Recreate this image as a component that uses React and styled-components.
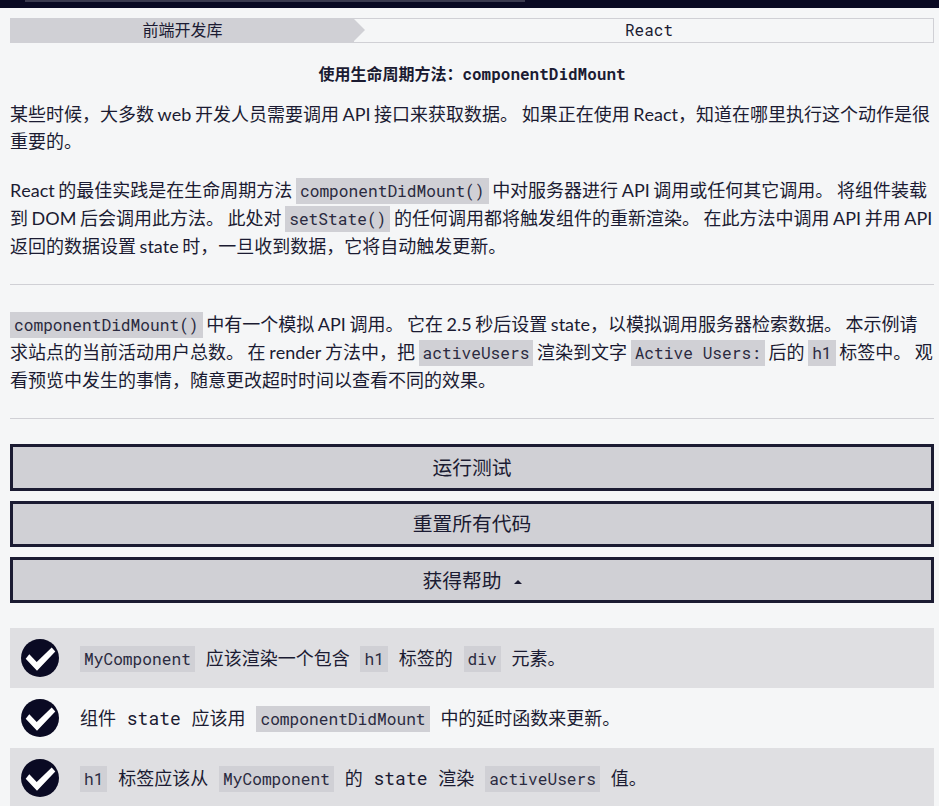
import React from "react";
import styled, { createGlobalStyle } from "styled-components";

const fonts = {
  body: `Lato, "Noto Sans CJK SC", sans-serif`,
  mono: `"Roboto Mono", "Noto Sans CJK SC", monospace`,
};

const colors = {
  page: "#f5f6f7",
  text: "#1b1b32",
  code: "#2a2a40",
  quaternary: "#d0d0d5",
  tertiary: "#dfdfe2",
  dark: "#0a0a23",
};

const GlobalStyle = createGlobalStyle`
  * {
    box-sizing: border-box;
  }
  body {
    margin: 0;
    background: ${colors.page};
    color: ${colors.text};
    font-family: ${fonts.body};
    font-size: 18px;
    overflow: hidden;
  }
`;

const TopBar = styled.div`
  height: 8px;
  background: ${colors.dark};
`;

const TopBarLine = styled.div`
  width: 500px;
  height: 2px;
  margin-left: 25px;
  background: #3b3b4f;
`;

const Panel = styled.main`
  height: 798px;
  padding: 10px 5px 0 10px;
  overflow: hidden;
`;

const Crumbs = styled.nav`
  display: flex;
  height: 25px;
  font-family: ${fonts.mono};
  font-size: 16px;
  line-height: 23px;
  text-align: center;
`;

const CrumbLeft = styled.div`
  position: relative;
  width: 344px;
  padding-left: 1px;
  background: ${colors.quaternary};

  &::after {
    content: "";
    position: absolute;
    top: 1px;
    left: 100%;
    border: solid transparent;
    border-width: 11.5px 0 11.5px 11px;
    border-left-color: ${colors.quaternary};
  }
`;

const CrumbRight = styled.div`
  flex: 1;
  padding-left: 11px;
  border: 1px solid ${colors.quaternary};
  border-left: 0;
  line-height: 21px;
`;

const Title = styled.h1`
  margin: 19px 0 15px;
  font-family: ${fonts.mono};
  font-size: 16px;
  line-height: 24px;
  font-weight: 700;
  text-align: center;
`;

const Paragraph = styled.p`
  margin: 0 0 ${(props) => (props.$lead ? "21px" : "22px")};
  line-height: ${(props) => (props.$lead ? "27px" : "28px")};
  word-spacing: -1.02px;
  font-kerning: none;
`;

const Code = styled.code`
  padding: 2px 4px 3px;
  background: ${colors.quaternary};
  color: ${colors.code};
  font-family: ${fonts.mono};
  font-size: 16.2px;
  line-height: 1;
  word-spacing: 0;
`;

const Divider = styled.hr`
  height: 1px;
  margin: 24px 0 25px;
  border: 0;
  background: ${colors.quaternary};
`;

const Actions = styled.div`
  display: flex;
  flex-direction: column;
  gap: 10px;
  padding-top: 0.2px;
`;

const Button = styled.button`
  display: flex;
  align-items: center;
  justify-content: center;
  height: 46.4px;
  padding: 0 0 2px;
  border: 3px solid ${colors.text};
  background: ${colors.quaternary};
  color: ${colors.text};
  font-family: ${fonts.body};
  font-size: 19.8px;
`;

const Caret = styled.span`
  margin: 6px 0 0 12px;
  border: solid transparent;
  border-width: 0 4px 4px;
  border-bottom-color: ${colors.text};
`;

const Tests = styled.ul`
  margin: 24.6px 0 0;
  padding: 0;
  list-style: none;
`;

const Test = styled.li`
  display: flex;
  align-items: center;
  gap: 20px;
  height: 60px;
  padding-left: 10px;
  font-family: ${fonts.mono};

  &:nth-child(odd) {
    background: ${colors.tertiary};
  }
`;

const TestText = styled.p`
  margin: 2px 0 0;
  line-height: 27px;
`;

const PassedIcon = () => (
  <svg width="40" height="40" viewBox="0 0 40 40">
    <circle cx="20" cy="20" r="19" fill={colors.dark} />
    <path
      d="M5.7 20.7 9.3 16.3 16.7 24 31.7 9.5 35.3 13.4 17 32.7Z"
      fill="#fff"
    />
  </svg>
);

const App = () => (
  <>
    <GlobalStyle />
    <TopBar>
      <TopBarLine />
    </TopBar>
    <Panel lang="zh-CN">
      <Crumbs>
        <CrumbLeft>前端开发库</CrumbLeft>
        <CrumbRight>React</CrumbRight>
      </Crumbs>
      <Title>使用生命周期方法：componentDidMount</Title>
      <Paragraph $lead>
        某些时候，大多数 web 开发人员需要调用 API 接口来获取数据。
        如果正在使用 React，知道在哪里执行这个动作是很重要的。
      </Paragraph>
      <Paragraph>
        React 的最佳实践是在生命周期方法 <Code>componentDidMount()</Code>{" "}
        中对服务器进行 API 调用或任何其它调用。 将组件装载到 DOM
        后会调用此方法。 此处对 <Code>setState()</Code>{" "}
        的任何调用都将触发组件的重新渲染。 在此方法中调用 API 并用 API
        返回的数据设置 state 时，一旦收到数据，它将自动触发更新。
      </Paragraph>
      <Divider />
      <Paragraph>
        <Code>componentDidMount()</Code> 中有一个模拟 API 调用。 它在 2.5
        秒后设置 state，以模拟调用服务器检索数据。
        本示例请求站点的当前活动用户总数。 在 render 方法中，把{" "}
        <Code>activeUsers</Code> 渲染到文字 <Code>Active Users:</Code> 后的{" "}
        <Code>h1</Code> 标签中。
        观看预览中发生的事情，随意更改超时时间以查看不同的效果。
      </Paragraph>
      <Divider />
      <Actions>
        <Button>运行测试</Button>
        <Button>重置所有代码</Button>
        <Button>
          获得帮助
          <Caret />
        </Button>
      </Actions>
      <Tests>
        <Test>
          <PassedIcon />
          <TestText>
            <Code>MyComponent</Code> 应该渲染一个包含 <Code>h1</Code> 标签的{" "}
            <Code>div</Code> 元素。
          </TestText>
        </Test>
        <Test>
          <PassedIcon />
          <TestText>
            组件 state 应该用 <Code>componentDidMount</Code>{" "}
            中的延时函数来更新。
          </TestText>
        </Test>
        <Test>
          <PassedIcon />
          <TestText>
            <Code>h1</Code> 标签应该从 <Code>MyComponent</Code> 的 state 渲染{" "}
            <Code>activeUsers</Code> 值。
          </TestText>
        </Test>
      </Tests>
    </Panel>
  </>
);

export default App;
